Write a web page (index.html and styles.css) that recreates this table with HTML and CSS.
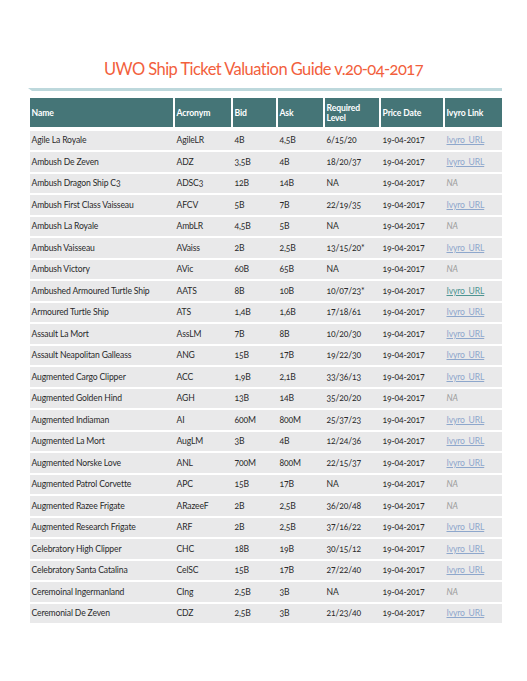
FILE: index.html
```html
<!DOCTYPE html>
<html>
<head>
<meta charset="utf-8">
<link rel="stylesheet" href="styles.css">
</head>
<body>
<div class="page">
  <h1 class="title">UWO Ship Ticket Valuation Guide v.20-04-2017</h1>
  <div class="rule"></div>
  <div class="table">
    <div class="row head">
      <div class="cell">Name</div>
      <div class="cell">Acronym</div>
      <div class="cell">Bid</div>
      <div class="cell">Ask</div>
      <div class="cell">Required Level</div>
      <div class="cell">Price Date</div>
      <div class="cell">Ivyro Link</div>
    </div>
    <div class="row"><div class="cell">Agile La Royale</div><div class="cell">AgileLR</div><div class="cell">4B</div><div class="cell">4,5B</div><div class="cell">6/15/20</div><div class="cell">19-04-2017</div><div class="cell"><a class="link">Ivyro_URL</a></div></div>
    <div class="row"><div class="cell">Ambush De Zeven</div><div class="cell">ADZ</div><div class="cell">3,5B</div><div class="cell">4B</div><div class="cell">18/20/37</div><div class="cell">19-04-2017</div><div class="cell"><a class="link">Ivyro_URL</a></div></div>
    <div class="row"><div class="cell">Ambush Dragon Ship C3</div><div class="cell">ADSC3</div><div class="cell">12B</div><div class="cell">14B</div><div class="cell">NA</div><div class="cell">19-04-2017</div><div class="cell na">NA</div></div>
    <div class="row"><div class="cell">Ambush First Class Vaisseau</div><div class="cell">AFCV</div><div class="cell">5B</div><div class="cell">7B</div><div class="cell">22/19/35</div><div class="cell">19-04-2017</div><div class="cell"><a class="link">Ivyro_URL</a></div></div>
    <div class="row"><div class="cell">Ambush La Royale</div><div class="cell">AmbLR</div><div class="cell">4,5B</div><div class="cell">5B</div><div class="cell">NA</div><div class="cell">19-04-2017</div><div class="cell na">NA</div></div>
    <div class="row"><div class="cell">Ambush Vaisseau</div><div class="cell">AVaiss</div><div class="cell">2B</div><div class="cell">2,5B</div><div class="cell">13/15/20*</div><div class="cell">19-04-2017</div><div class="cell"><a class="link">Ivyro_URL</a></div></div>
    <div class="row"><div class="cell">Ambush Victory</div><div class="cell">AVic</div><div class="cell">60B</div><div class="cell">65B</div><div class="cell">NA</div><div class="cell">19-04-2017</div><div class="cell na">NA</div></div>
    <div class="row"><div class="cell">Ambushed Armoured Turtle Ship</div><div class="cell">AATS</div><div class="cell">8B</div><div class="cell">10B</div><div class="cell">10/07/23*</div><div class="cell">19-04-2017</div><div class="cell"><a class="link visited">Ivyro_URL</a></div></div>
    <div class="row"><div class="cell">Armoured Turtle Ship</div><div class="cell">ATS</div><div class="cell">1,4B</div><div class="cell">1,6B</div><div class="cell">17/18/61</div><div class="cell">19-04-2017</div><div class="cell"><a class="link">Ivyro_URL</a></div></div>
    <div class="row"><div class="cell">Assault La Mort</div><div class="cell">AssLM</div><div class="cell">7B</div><div class="cell">8B</div><div class="cell">10/20/30</div><div class="cell">19-04-2017</div><div class="cell"><a class="link">Ivyro_URL</a></div></div>
    <div class="row"><div class="cell">Assault Neapolitan Galleass</div><div class="cell">ANG</div><div class="cell">15B</div><div class="cell">17B</div><div class="cell">19/22/30</div><div class="cell">19-04-2017</div><div class="cell"><a class="link">Ivyro_URL</a></div></div>
    <div class="row"><div class="cell">Augmented Cargo Clipper</div><div class="cell">ACC</div><div class="cell">1,9B</div><div class="cell">2,1B</div><div class="cell">33/36/13</div><div class="cell">19-04-2017</div><div class="cell"><a class="link">Ivyro_URL</a></div></div>
    <div class="row"><div class="cell">Augmented Golden Hind</div><div class="cell">AGH</div><div class="cell">13B</div><div class="cell">14B</div><div class="cell">35/20/20</div><div class="cell">19-04-2017</div><div class="cell na">NA</div></div>
    <div class="row"><div class="cell">Augmented Indiaman</div><div class="cell">AI</div><div class="cell">600M</div><div class="cell">800M</div><div class="cell">25/37/23</div><div class="cell">19-04-2017</div><div class="cell"><a class="link">Ivyro_URL</a></div></div>
    <div class="row"><div class="cell">Augmented La Mort</div><div class="cell">AugLM</div><div class="cell">3B</div><div class="cell">4B</div><div class="cell">12/24/36</div><div class="cell">19-04-2017</div><div class="cell"><a class="link">Ivyro_URL</a></div></div>
    <div class="row"><div class="cell">Augmented Norske Love</div><div class="cell">ANL</div><div class="cell">700M</div><div class="cell">800M</div><div class="cell">22/15/37</div><div class="cell">19-04-2017</div><div class="cell"><a class="link">Ivyro_URL</a></div></div>
    <div class="row"><div class="cell">Augmented Patrol Corvette</div><div class="cell">APC</div><div class="cell">15B</div><div class="cell">17B</div><div class="cell">NA</div><div class="cell">19-04-2017</div><div class="cell na">NA</div></div>
    <div class="row"><div class="cell">Augmented Razee Frigate</div><div class="cell">ARazeeF</div><div class="cell">2B</div><div class="cell">2,5B</div><div class="cell">36/20/48</div><div class="cell">19-04-2017</div><div class="cell na">NA</div></div>
    <div class="row"><div class="cell">Augmented Research Frigate</div><div class="cell">ARF</div><div class="cell">2B</div><div class="cell">2,5B</div><div class="cell">37/16/22</div><div class="cell">19-04-2017</div><div class="cell"><a class="link">Ivyro_URL</a></div></div>
    <div class="row"><div class="cell">Celebratory High Clipper</div><div class="cell">CHC</div><div class="cell">18B</div><div class="cell">19B</div><div class="cell">30/15/12</div><div class="cell">19-04-2017</div><div class="cell"><a class="link">Ivyro_URL</a></div></div>
    <div class="row"><div class="cell">Celebratory Santa Catalina</div><div class="cell">CelSC</div><div class="cell">15B</div><div class="cell">17B</div><div class="cell">27/22/40</div><div class="cell">19-04-2017</div><div class="cell"><a class="link">Ivyro_URL</a></div></div>
    <div class="row"><div class="cell">Ceremoinal Ingermanland</div><div class="cell">CIng</div><div class="cell">2,5B</div><div class="cell">3B</div><div class="cell">NA</div><div class="cell">19-04-2017</div><div class="cell na">NA</div></div>
    <div class="row"><div class="cell">Ceremonial De Zeven</div><div class="cell">CDZ</div><div class="cell">2,5B</div><div class="cell">3B</div><div class="cell">21/23/40</div><div class="cell">19-04-2017</div><div class="cell"><a class="link">Ivyro_URL</a></div></div>
  </div>
</div>
</body>
</html>
```
FILE: styles.css
```css
html, body {
  margin: 0;
  padding: 0;
  background: #ffffff;
}
body {
  font-family: Lato, "Open Sans", "Liberation Sans", sans-serif;
  font-variant-numeric: oldstyle-nums;
  color: #2a2a2a;
}
.page {
  width: 527px;
  padding-top: 57px;
}
.title {
  margin: 0;
  height: 24px;
  line-height: 24px;
  font-size: 16.5px;
  letter-spacing: -0.55px;
  font-weight: normal;
  color: #f2603c;
  text-align: center;
}
.rule {
  margin: 7px 25px 0 28px;
  height: 3px;
  background: #bdd8dc;
  clip-path: polygon(0 0, 100% 0, 100% 100%, 4px 100%);
}
.table {
  margin: 7px 0 0 30px;
  width: 472px;
  display: flex;
  flex-direction: column;
  gap: 2px;
}
.row {
  display: grid;
  grid-template-columns: 143px 56px 43px 45px 54px 62px 57px;
  column-gap: 2px;
  height: 19.5px;
  background: #e9e9ea;
  font-size: 8.6px;
  letter-spacing: -0.15px;
  align-items: center;
}
.row.head {
  height: 29px;
  margin-bottom: 1.5px;
  background: transparent;
  align-items: stretch;
  font-size: 8.6px;
  letter-spacing: -0.1px;
  font-weight: bold;
  color: #ffffff;
}
.row.head .cell {
  background: #457577;
  display: flex;
  align-items: center;
  line-height: 10px;
  white-space: normal;
}
.cell {
  padding-left: 1.5px;
  white-space: nowrap;
  overflow: hidden;
}
.link {
  color: #8ea7cc;
  text-decoration: underline;
}
.link.visited {
  color: #4f9593;
}
.na {
  color: #9a9a9a;
  font-style: italic;
}
```
